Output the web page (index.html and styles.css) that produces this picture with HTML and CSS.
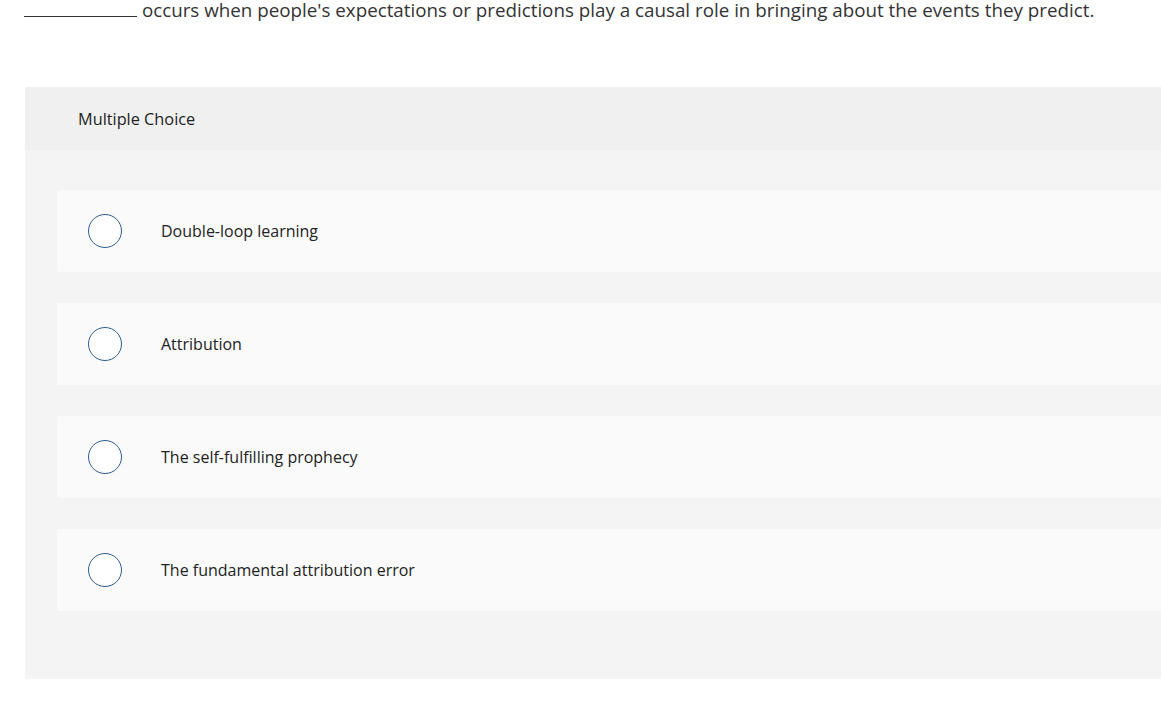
FILE: index.html
```html
<!DOCTYPE html>
<html>
<head>
<meta charset="utf-8">
<link rel="stylesheet" href="styles.css">
</head>
<body>
<p class="prompt"><span class="blank"></span> occurs when people's expectations or predictions play a causal role in bringing about the events they predict.</p>
<section class="panel">
  <header class="panel-head">Multiple Choice</header>
  <div class="options">
    <label class="option"><span class="radio"></span><span class="text">Double-loop learning</span></label>
    <label class="option"><span class="radio"></span><span class="text">Attribution</span></label>
    <label class="option"><span class="radio"></span><span class="text">The self-fulfilling prophecy</span></label>
    <label class="option"><span class="radio"></span><span class="text">The fundamental attribution error</span></label>
  </div>
</section>
</body>
</html>
```
FILE: styles.css
```css
html, body {
  margin: 0;
  padding: 0;
  background: #fff;
}
body {
  font-family: "Open Sans", "Liberation Sans", sans-serif;
  color: #222;
  width: 1161px;
  overflow: hidden;
}
.prompt {
  margin: 0;
  padding: 0 0 0 24px;
  height: 24px;
  font-size: 18.8px;
  line-height: 20px;
  color: #333;
  white-space: nowrap;
}
.blank {
  display: inline-block;
  width: 113px;
  height: 16px;
  border-bottom: 1px solid #333;
  vertical-align: top;
}
.panel {
  margin: 63px 0 0 25px;
  background: #f4f4f4;
  border-radius: 3px 0 0 3px;
  padding-bottom: 68px;
}
.panel-head {
  background: #f0f0f0;
  height: 63px;
  display: flex;
  align-items: center;
  padding-left: 53px;
  font-size: 16.3px;
  color: #222;
  border-radius: 3px 0 0 0;
}
.options {
  display: flex;
  flex-direction: column;
  gap: 31px;
  padding: 40px 0 0 32px;
}
.option {
  display: flex;
  align-items: center;
  height: 82px;
  background: #fafafa;
  border-radius: 3px 0 0 3px;
}
.radio {
  width: 32px;
  height: 32px;
  border: 1.5px solid #2c5d8f;
  border-radius: 50%;
  background: #fff;
  margin-left: 31px;
  flex: none;
}
.text {
  margin-left: 39px;
  font-size: 16px;
  color: #222;
}
```
